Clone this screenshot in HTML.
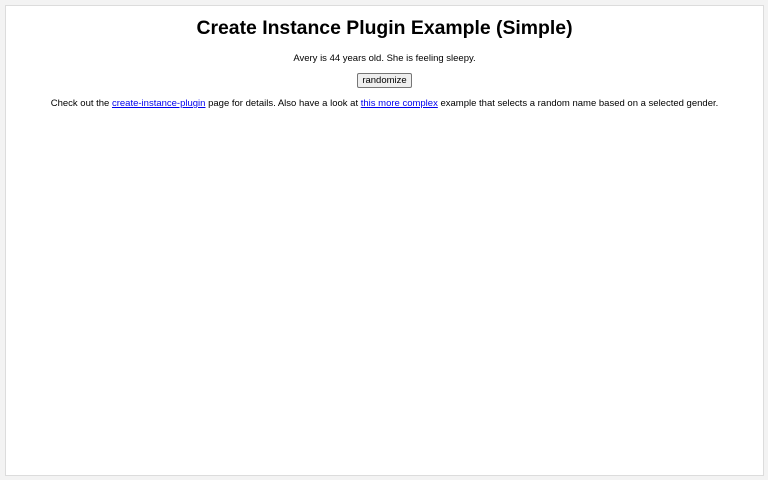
<!DOCTYPE html>
<html><head><style>
html,body{margin:0;padding:0;width:768px;height:480px;background:#f3f3f3;overflow:hidden;font-family:"Liberation Sans",Arial,sans-serif;}
.panel{position:absolute;left:5px;top:5px;width:757px;height:469px;background:#fff;border:1px solid #dcdcdc;}
h1{position:absolute;left:0;right:0;top:11px;margin:0;text-align:center;font-size:19.4px;font-weight:bold;color:#000;line-height:23px;}
.p{position:absolute;left:0;right:0;text-align:center;font-size:9.5px;color:#000;line-height:12px;}
a{color:#0000ee;text-decoration:underline;}
.btn{position:absolute;left:351px;top:67px;width:55px;height:15px;box-sizing:border-box;border:1px solid #767676;border-radius:2px;background:#efefef;font-size:9.5px;line-height:13px;text-align:center;color:#000;}
</style></head><body>
<div class="panel">
<h1>Create Instance Plugin Example (Simple)</h1>
<div class="p" style="top:47px">Avery is 44 years old. She is feeling sleepy.</div>
<div class="btn">randomize</div>
<div class="p" style="top:92px">Check out the <a>create-instance-plugin</a> page for details. Also have a look at <a>this more complex</a> example that selects a random name based on a selected gender.</div>
</div>
</body></html>
